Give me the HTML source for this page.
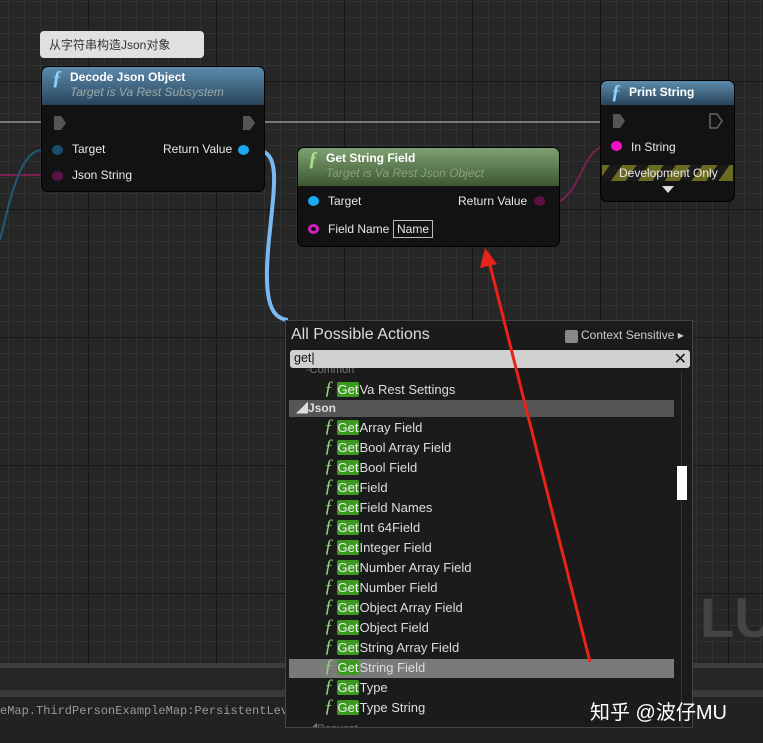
<!DOCTYPE html>
<html><head><meta charset="utf-8"><style>
*{margin:0;padding:0;box-sizing:border-box}
body{width:763px;height:743px;overflow:hidden;background:#262626;font-family:"Liberation Sans","Noto Sans CJK SC",sans-serif;position:relative;color:#ddd}
.grid{position:absolute;left:0;top:0;width:763px;height:663px;
background-image:linear-gradient(90deg,#171717 1px,transparent 1px),linear-gradient(#171717 1px,transparent 1px),linear-gradient(90deg,#313131 1px,transparent 1px),linear-gradient(#313131 1px,transparent 1px);
background-size:128px 128px,128px 128px,16px 16px,16px 16px;background-position:88px 81px,88px 81px,8px 1px,8px 1px}
.node{position:absolute;background:#121212;border-radius:6px;box-shadow:0 0 0 1px #000}
.hd{border-radius:6px 6px 0 0;padding:3px 0 0 28px;position:relative;font-weight:bold;font-size:12px;color:#fff}
.hd i{position:absolute;left:10px;top:0;font-family:"Liberation Serif",serif;font-size:20px;color:#8fd0ff}
.sub{font-weight:normal;font-style:italic;font-size:12px;color:#9aa;margin-top:1px}
.t{position:absolute;font-size:12px;color:#e8e8e8}
.pin{position:absolute;width:11px;height:10px;border-radius:50%}
.pop{position:absolute;left:285px;top:320px;width:408px;height:408px;background:#1b1b1b;border:1px solid #444;overflow:hidden}
.row{position:absolute;left:38px;font-size:13px;color:#ddd;height:18px;line-height:18px;white-space:nowrap}
.row i{font-family:"Liberation Serif",serif;font-size:19px;color:#8fd67a;margin-right:3px}
.row b{font-weight:normal;background:#3a9a1e;color:#eee;border-radius:2px;padding:0 1px}
</style></head><body>
<div class="grid"></div>
<div style="position:absolute;left:0;top:663px;width:763px;height:5px;background:#3c3c3c"></div>
<div style="position:absolute;left:0;top:668px;width:763px;height:22px;background:#262626"></div>
<div style="position:absolute;left:0;top:690px;width:763px;height:7px;background:#3a3a3a"></div>
<div style="position:absolute;left:0;top:697px;width:763px;height:46px;background:#222"></div>
<div style="position:absolute;left:0;top:704px;font-family:'Liberation Mono',monospace;font-size:12px;color:#999">eMap.ThirdPersonExampleMap:PersistentLevel</div>
<div style="position:absolute;left:700px;top:585px;font-size:56px;font-weight:bold;color:#444">LU</div>
<svg style="position:absolute;left:0;top:0" width="763" height="743">
<line x1="0" y1="122" x2="42" y2="122" stroke="#777" stroke-width="2"/>
<line x1="265" y1="122" x2="602" y2="122" stroke="#777" stroke-width="2"/>
<line x1="0" y1="175" x2="42" y2="175" stroke="#7a2050" stroke-width="2"/>
<path d="M0 240 C10 200 20 150 42 150" stroke="#1f5a7a" stroke-width="2" fill="none"/>
<path d="M560 201 C580 190 585 150 602 147" stroke="#7a2050" stroke-width="2" fill="none"/>
<path d="M255 150 C280 150 275 180 270 230 C262 300 270 318 288 320" stroke="#7ab8f0" stroke-width="4" fill="none"/>
</svg>
<div style="position:absolute;left:40px;top:31px;width:164px;height:27px;background:#e0e0e0;border-radius:4px;font-size:12px;color:#333;padding:5px 0 0 9px">从字符串构造Json对象</div>
<div class="node" style="left:42px;top:67px;width:222px;height:124px">
<div class="hd" style="height:38px;background:linear-gradient(#5c8bac,#29445a)"><i>ƒ</i>Decode Json Object<div class="sub">Target is Va Rest Subsystem</div></div>
<svg style="position:absolute;left:10px;top:48px" width="220" height="16"><path d="M2 1h7l5 7-5 7H2z" fill="#555"/><path d="M191 1h7l5 7-5 7h-7z" fill="#555"/></svg>
<div class="pin" style="left:10px;top:78px;background:#1b4d6a"></div><div class="t" style="left:30px;top:75px">Target</div>
<div class="t" style="left:121px;top:75px">Return Value</div><div class="pin" style="left:196px;top:78px;background:#1aa8f0"></div>
<div class="pin" style="left:10px;top:104px;background:#5a1244"></div><div class="t" style="left:30px;top:101px">Json String</div>
</div>
<div class="node" style="left:298px;top:148px;width:261px;height:98px">
<div class="hd" style="height:38px;background:linear-gradient(#7fa072,#3c5833)"><i style="color:#a8e08a">ƒ</i>Get String Field<div class="sub" style="color:#8aa080">Target is Va Rest Json Object</div></div>
<div class="pin" style="left:10px;top:48px;background:#1aa8f0"></div><div class="t" style="left:30px;top:46px">Target</div>
<div class="t" style="left:160px;top:46px">Return Value</div><div class="pin" style="left:236px;top:48px;background:#5a1244"></div>
<div class="pin" style="left:10px;top:76px;border:3px solid #d020c0"></div><div class="t" style="left:30px;top:74px">Field Name</div>
<div class="t" style="left:95px;top:72px;border:1px solid #bbb;padding:1px 3px">Name</div>
</div>
<div class="node" style="left:601px;top:81px;width:133px;height:120px">
<div class="hd" style="height:24px;padding-top:4px;background:linear-gradient(#5c8bac,#29445a)"><i>ƒ</i>Print String</div>
<svg style="position:absolute;left:10px;top:32px" width="115" height="16"><path d="M2 1h7l5 7-5 7H2z" fill="#555"/><path d="M99 1h7l5 7-5 7h-7z" fill="none" stroke="#666" stroke-width="1.5"/></svg>
<div class="pin" style="left:10px;top:60px;background:#f010c8"></div><div class="t" style="left:30px;top:59px">In String</div>
<div style="position:absolute;left:1px;top:84px;width:131px;height:16px;background:repeating-linear-gradient(-55deg,#6a6a20 0 12px,#1a1a1a 12px 22px)"></div>
<div class="t" style="left:18px;top:85px;font-size:12px">Development Only</div>
<div style="position:absolute;left:61px;top:105px;border-left:6px solid transparent;border-right:6px solid transparent;border-top:7px solid #ddd"></div>
</div>
<div class="pop">
<div style="position:absolute;left:5px;top:5px;font-size:16px;color:#ddd">All Possible Actions</div>
<div style="position:absolute;left:279px;top:9px;width:13px;height:13px;background:#888;border-radius:2px"></div>
<div style="position:absolute;left:295px;top:7px;font-size:12px;color:#ccc">Context Sensitive ▸</div>
<div style="position:absolute;left:4px;top:29px;width:400px;height:18px;background:#d0d0d0;border-radius:3px;font-size:12.5px;color:#111;padding:1px 0 0 4px">get|<span style="position:absolute;right:3px;top:-1px;font-size:16px">✕</span></div>
<div style="position:absolute;left:20px;top:47px;font-size:11px;color:#777;height:6px;overflow:hidden;line-height:4px">-Common</div>
<div style="position:absolute;left:3px;top:79px;width:385px;height:17px;background:#555"></div>
<div style="position:absolute;left:10px;top:79px;font-size:12px;font-weight:bold;color:#ddd;line-height:17px">◢Json</div>
<div style="position:absolute;left:3px;top:338px;width:385px;height:19px;background:#7a7a7a"></div>
<div style="position:absolute;left:395px;top:50px;width:1px;height:370px;background:#333"></div>
<div style="position:absolute;left:391px;top:145px;width:10px;height:34px;background:#fff"></div>
<div class="row" style="top:59px"><i>ƒ</i><b>Get</b>Va Rest Settings</div>
<div class="row" style="top:97px"><i>ƒ</i><b>Get</b>Array Field</div>
<div class="row" style="top:117px"><i>ƒ</i><b>Get</b>Bool Array Field</div>
<div class="row" style="top:137px"><i>ƒ</i><b>Get</b>Bool Field</div>
<div class="row" style="top:157px"><i>ƒ</i><b>Get</b>Field</div>
<div class="row" style="top:177px"><i>ƒ</i><b>Get</b>Field Names</div>
<div class="row" style="top:197px"><i>ƒ</i><b>Get</b>Int 64Field</div>
<div class="row" style="top:217px"><i>ƒ</i><b>Get</b>Integer Field</div>
<div class="row" style="top:237px"><i>ƒ</i><b>Get</b>Number Array Field</div>
<div class="row" style="top:257px"><i>ƒ</i><b>Get</b>Number Field</div>
<div class="row" style="top:277px"><i>ƒ</i><b>Get</b>Object Array Field</div>
<div class="row" style="top:297px"><i>ƒ</i><b>Get</b>Object Field</div>
<div class="row" style="top:317px"><i>ƒ</i><b>Get</b>String Array Field</div>
<div class="row" style="top:337px"><i>ƒ</i><b>Get</b>String Field</div>
<div class="row" style="top:357px"><i>ƒ</i><b>Get</b>Type</div>
<div class="row" style="top:377px"><i>ƒ</i><b>Get</b>Type String</div>
<div style="position:absolute;left:20px;top:399px;font-size:11px;color:#777">◢Request</div>
</div>
<div style="position:absolute;left:590px;top:696px;font-size:20px;color:#fff">知乎 @波仔MU</div>
<svg style="position:absolute;left:0;top:0" width="763" height="743">
<line x1="590" y1="662" x2="490" y2="265" stroke="#e8231a" stroke-width="3"/>
<path d="M485 248 L480 268 L497 264 Z" fill="#e8231a"/>
</svg>
</body></html>
